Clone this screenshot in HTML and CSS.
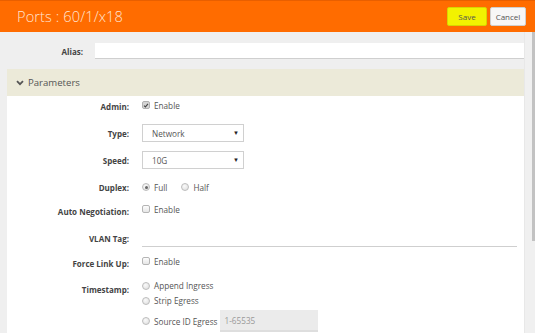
FILE: index.html
```html
<!DOCTYPE html>
<html>
<head>
<meta charset="utf-8">
<link rel="stylesheet" href="styles.css">
</head>
<body>
<div class="header">
  <div class="title">Ports : 60/1/x18</div>
  <div class="actions">
    <button class="btn btn-save">Save</button>
    <button class="btn btn-cancel">Cancel</button>
  </div>
</div>
<div class="content">
  <div class="main">
    <div class="alias-row">
      <div class="alias-label">Alias:</div>
      <div class="alias-input"></div>
    </div>
    <div class="panel">
      <div class="panel-head">
        <svg class="chev" width="8" height="6" viewBox="0 0 8 6"><path d="M1 1.2 L4 4.2 L7 1.2" fill="none" stroke="#555" stroke-width="1.8"/></svg>
        <span>Parameters</span>
      </div>
      <div class="panel-body">
        <div class="row r-admin">
          <div class="label">Admin:</div>
          <div class="ctrl"><span class="cb checked"><svg width="7" height="7" viewBox="0 0 7 7"><path d="M1.2 3.6 L2.8 5.2 L5.8 1.6" fill="none" stroke="#444" stroke-width="1.3"/></svg></span><span class="opt-text">Enable</span></div>
        </div>
        <div class="row r-type">
          <div class="label">Type:</div>
          <div class="ctrl"><div class="select"><span>Network</span><span class="arrow">▼</span></div></div>
        </div>
        <div class="row r-speed">
          <div class="label">Speed:</div>
          <div class="ctrl"><div class="select"><span>10G</span><span class="arrow">▼</span></div></div>
        </div>
        <div class="row r-duplex">
          <div class="label">Duplex:</div>
          <div class="ctrl">
            <span class="radio on"></span><span class="opt-text">Full</span>
            <span class="radio sp"></span><span class="opt-text">Half</span>
          </div>
        </div>
        <div class="row r-auto">
          <div class="label">Auto Negotiation:</div>
          <div class="ctrl up"><span class="cb"></span><span class="opt-text">Enable</span></div>
        </div>
        <div class="row r-vlan">
          <div class="label">VLAN Tag:</div>
          <div class="ctrl"><div class="line-input"></div></div>
        </div>
        <div class="row r-force">
          <div class="label">Force Link Up:</div>
          <div class="ctrl up"><span class="cb"></span><span class="opt-text">Enable</span></div>
        </div>
        <div class="row r-ts">
          <div class="label ts-label">Timestamp:</div>
          <div class="ts-opts">
            <div class="ts-opt"><span class="radio"></span><span class="opt-text">Append Ingress</span></div>
            <div class="ts-opt"><span class="radio"></span><span class="opt-text">Strip Egress</span></div>
            <div class="ts-opt"><span class="radio"></span><span class="opt-text">Source ID Egress</span><div class="src-input">1-65535</div></div>
          </div>
        </div>
      </div>
    </div>
  </div>
  <div class="scrollbar"><div class="thumb"></div></div>
</div>
</body>
</html>
```
FILE: styles.css
```css
* { box-sizing: border-box; }
html, body { margin: 0; padding: 0; }
body {
  width: 535px;
  height: 333px;
  overflow: hidden;
  background: #efefef;
  font-family: "Open Sans", "Liberation Sans", sans-serif;
  color: #555;
}
.header {
  height: 32px;
  background: #ff6c00;
  border-top: 1px solid #e85f00;
  display: flex;
  align-items: center;
  justify-content: space-between;
  padding: 0 9px 0 17px;
}
.title {
  color: #ffe4d2;
  font-size: 14.6px;
  font-weight: 300;
  letter-spacing: 0.1px;
  margin-top: -1px;
}
.actions { display: flex; gap: 3px; }
.btn {
  font-family: "Open Sans", "Liberation Sans", sans-serif;
  font-size: 8px;
  height: 19px;
  padding: 0;
  border-radius: 2px;
  color: #555;
  cursor: pointer;
}
.btn-save {
  width: 40px;
  background: #f2f200;
  border: 1px solid #d8d400;
}
.btn-cancel {
  width: 36px;
  background: #f7f7f7;
  border: 1px solid #cfcfcf;
}
.content {
  display: flex;
  height: 301px;
}
.main {
  flex: 1;
  padding: 11px 0 0 7px;
  overflow: hidden;
  display: flex;
  flex-direction: column;
}
.scrollbar {
  width: 11px;
  background: #f0f0f0;
  border-left: 1px solid #e8e8e8;
  display: flex;
  justify-content: flex-end;
}
.thumb {
  width: 3px;
  height: 209px;
  background: #c2c2c2;
}
.alias-row {
  display: flex;
  align-items: center;
  height: 16px;
  flex-shrink: 0;
}
.alias-label {
  width: 76px;
  text-align: right;
  font-size: 8px;
  font-weight: 700;
  color: #444;
}
.alias-input {
  margin-left: 12px;
  flex: 1;
  height: 16px;
  background: #fff;
  border-bottom: 1px solid #cfcfcf;
}
.panel {
  margin-top: 10px;
  background: #fff;
  flex: 1;
}
.panel-head {
  height: 27px;
  background: #ecead9;
  display: flex;
  align-items: center;
  padding-left: 9px;
  font-size: 9.6px;
  color: #555;
}
.chev { margin-right: 4px; }
.row {
  display: flex;
  align-items: center;
}
.label {
  width: 122px;
  text-align: right;
  font-size: 8px;
  font-weight: 700;
  color: #444;
  flex-shrink: 0;
}
.ctrl {
  margin-left: 13px;
  display: flex;
  align-items: center;
  flex: 1;
}
.ctrl.up { margin-top: -4px; }
.opt-text { font-size: 8.2px; color: #555; }
.r-admin { height: 20px; }
.r-admin .ctrl { margin-top: -2px; }
.r-type { height: 18px; margin-top: 8px; }
.r-speed { height: 18px; margin-top: 9px; }
.r-duplex { height: 20px; margin-top: 8px; }
.r-auto { height: 20px; margin-top: 4px; }
.r-vlan { height: 18px; margin-top: 8px; }
.r-force { height: 18px; margin-top: 7px; }
.r-ts { align-items: flex-start; margin-top: 6px; }
.ts-label { margin-top: 6px; }
.cb {
  width: 8px;
  height: 8px;
  border: 1px solid #b5b5b5;
  border-radius: 2px;
  background: linear-gradient(#fdfdfd, #e6e6e6);
  margin-right: 4px;
  display: inline-flex;
  align-items: center;
  justify-content: center;
}
.cb.checked { background: #d4d4d4; border-color: #b0b0b0; }
.cb svg { display: block; }
.radio {
  width: 8px;
  height: 8px;
  border-radius: 50%;
  border: 1px solid #bdbdbd;
  background: radial-gradient(circle at 40% 35%, #fafafa, #dcdcdc);
  margin-right: 4px;
  display: inline-block;
  position: relative;
}
.radio.on::after {
  content: "";
  position: absolute;
  left: 1.5px;
  top: 1.5px;
  width: 3px;
  height: 3px;
  border-radius: 50%;
  background: #666;
}
.radio.sp { margin-left: 14px; }
.select {
  width: 102px;
  height: 18px;
  border: 1px solid #d0d0d0;
  background: #fff;
  display: flex;
  align-items: center;
  justify-content: space-between;
  padding: 0 4px 0 9px;
  font-size: 8.2px;
  color: #555;
}
.arrow { font-size: 6px; color: #222; }
.line-input {
  width: 375px;
  height: 18px;
  border-bottom: 1px solid #cfcfcf;
}
.ts-opts {
  margin-left: 13px;
  display: flex;
  flex-direction: column;
}
.ts-opt {
  display: flex;
  align-items: center;
  height: 15px;
}
.ts-opt:last-child { margin-top: 2px; height: 22px; }
.src-input {
  margin-left: 2px;
  width: 98px;
  height: 22px;
  background: #ebebeb;
  border-bottom: 2px solid #dedede;
  font-size: 8.2px;
  color: #999;
  display: flex;
  align-items: center;
  padding-left: 5px;
}
```
